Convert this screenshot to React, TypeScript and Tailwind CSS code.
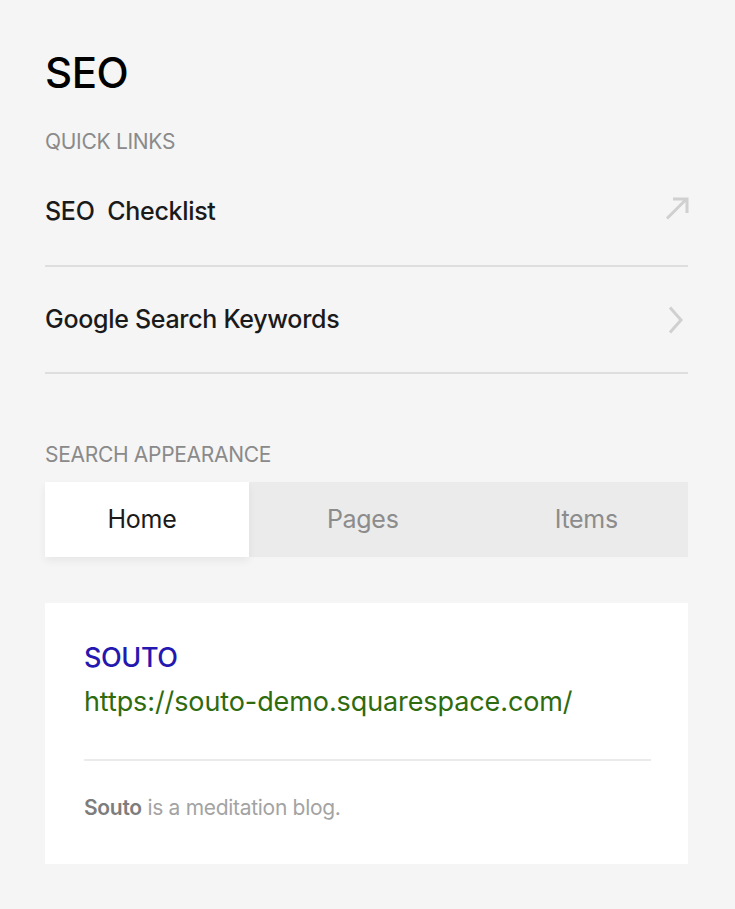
import { useState } from 'react'

const tabs = ['Home', 'Pages', 'Items']

function ArrowUpRight() {
  return (
    <svg width="24" height="23" viewBox="0 0 24 23" fill="none" className="text-[#d0d0d0]">
      <path d="M2 21.5L21 2.5M8 2H22V16" stroke="currentColor" strokeWidth="3" />
    </svg>
  )
}

function ChevronRight() {
  return (
    <svg width="16" height="28" viewBox="0 0 16 28" fill="none" className="text-[#d0d0d0]">
      <path d="M2 1.5L13 14L2 26.5" stroke="currentColor" strokeWidth="3" />
    </svg>
  )
}

export default function App() {
  const [active, setActive] = useState('Home')

  return (
    <div className="min-h-[909px] bg-[#f5f5f5] pt-[50px] pr-[47px] pb-[44px] pl-[45px] font-['Inter',sans-serif] text-[#1a1a1a]">
      <h1 className="text-[42px] font-medium leading-[46px] tracking-[-0.5px] text-black">SEO</h1>

      <p className="mt-[34px] text-[21px] leading-6 tracking-[-0.3px] text-[#8a8a8a]">QUICK LINKS</p>

      <div className="mt-[11px]">
        <a className="flex h-[102px] items-center justify-between border-b-2 border-[#dedede] pb-[6px]">
          <span className="text-[25px] font-medium tracking-[-0.3px]">SEO&nbsp; Checklist</span>
          <span className="mb-[8px] mr-[-1px]">
            <ArrowUpRight />
          </span>
        </a>
        <a className="flex h-[107px] items-center justify-between border-b-2 border-[#dedede]">
          <span className="text-[25px] font-medium tracking-[-0.3px]">Google Search Keywords</span>
          <span className="mr-[4px]">
            <ChevronRight />
          </span>
        </a>
      </div>

      <p className="mt-[69px] text-[21px] leading-6 tracking-[-0.3px] text-[#8a8a8a]">SEARCH APPEARANCE</p>

      <div className="mt-[15px] flex h-[75px] bg-[#ebebeb]">
        {tabs.map((tab) => (
          <button
            key={tab}
            type="button"
            onClick={() => setActive(tab)}
            className={[
              'flex items-center justify-center text-[25px] font-normal tracking-[-0.3px]',
              tab === 'Home' ? 'w-[204px] shrink-0 pr-[10px]' : 'flex-1',
              tab === 'Pages' ? 'pl-[12px]' : '',
              tab === 'Items' ? 'pl-[20px]' : '',
              active === tab
                ? 'bg-white text-[#1a1a1a] shadow-[0_4px_8px_rgba(0,0,0,0.06)]'
                : 'text-[#8c8c8c]',
            ].join(' ')}
          >
            {tab}
          </button>
        ))}
      </div>

      <div className="mt-[46px] bg-white px-[39px] pt-[40px] pb-[44px]">
        <p className="text-[27px] font-medium leading-[30px] tracking-[-0.4px] text-[#2518b0]">SOUTO</p>
        <p className="mt-[14px] text-[27px] leading-[30px] tracking-[-0.1px] text-[#2e6b0e]">
          https://souto-demo.squarespace.com/
        </p>
        <div className="mt-[42px] mr-[-2px] border-t-2 border-[#ebebeb]" />
        <p className="mt-[35px] text-[21px] leading-6 tracking-[-0.3px] text-[#a3a3a3]">
          <span className="font-semibold text-[#7d7d7d]">Souto</span> is a meditation blog.
        </p>
      </div>
    </div>
  )
}
